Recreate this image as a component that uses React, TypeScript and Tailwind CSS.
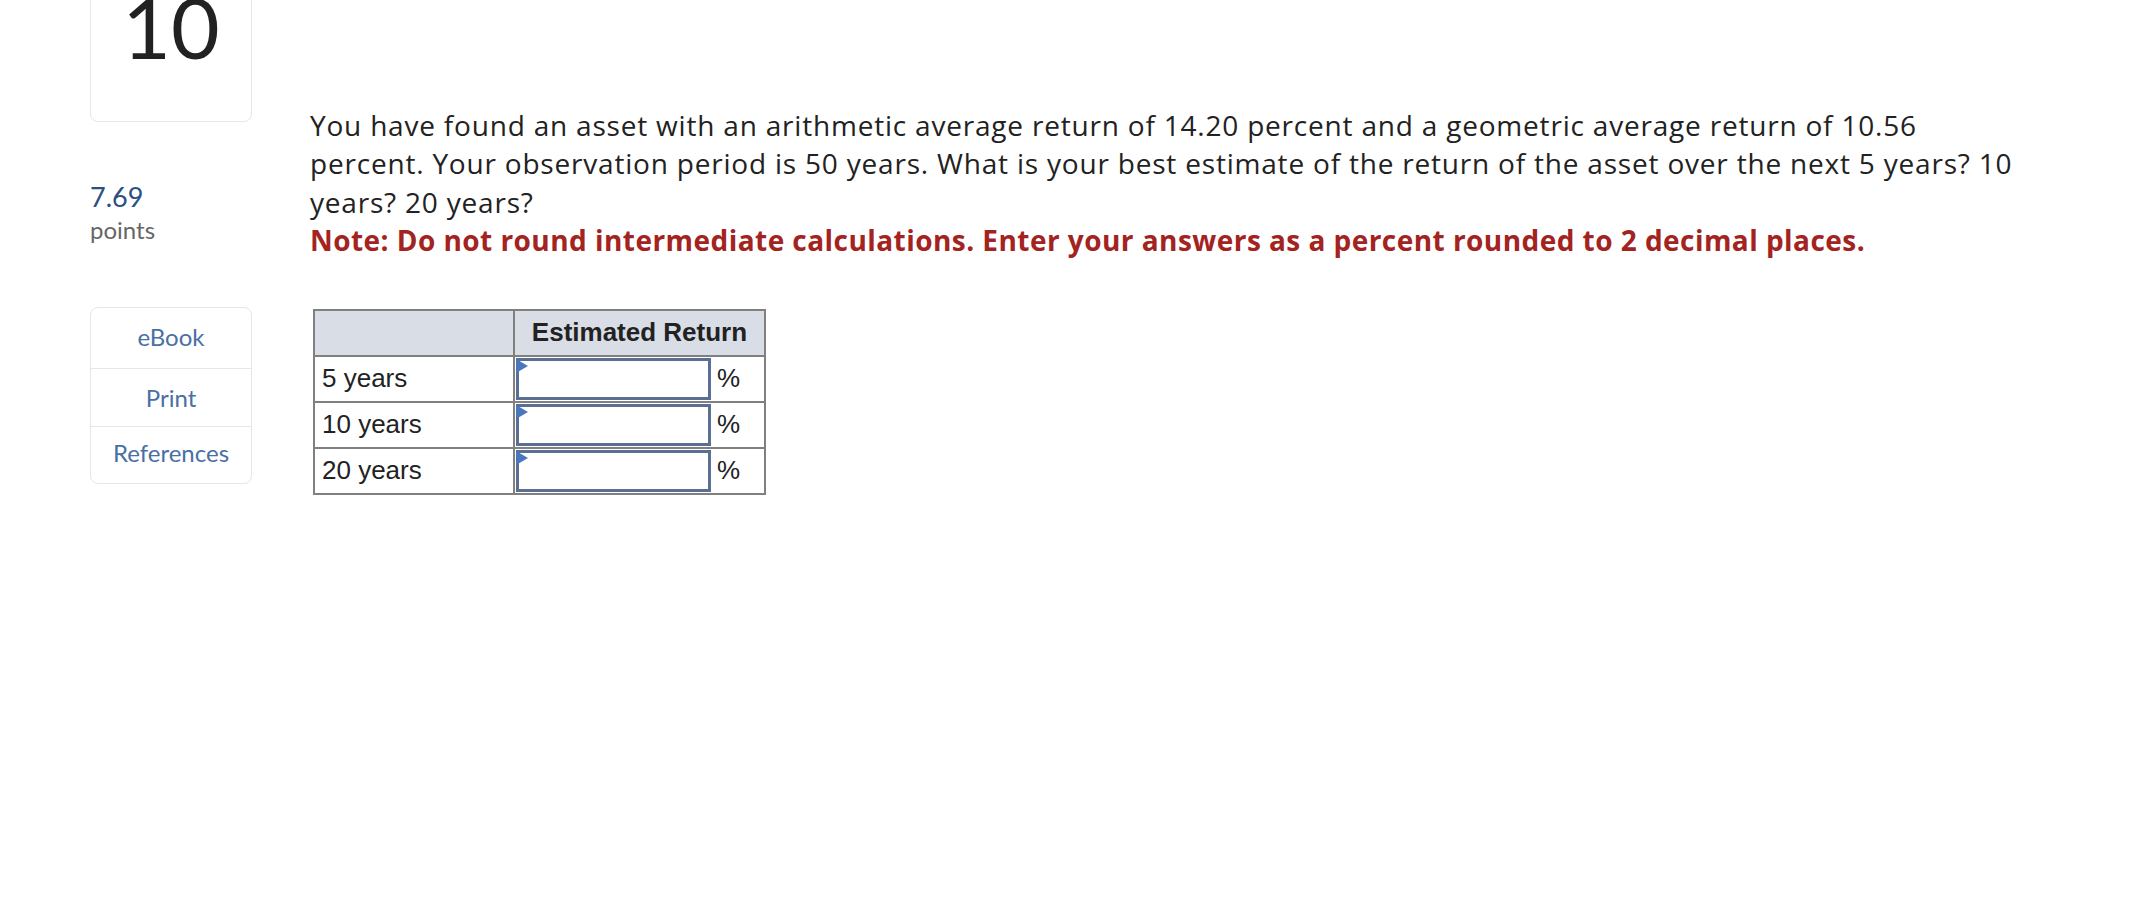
import React from 'react';

const rows = ['5 years', '10 years', '20 years'];

const AnswerInput: React.FC<{ label: string }> = ({ label }) => (
  <div className="relative h-[42px] border-[3px] border-[#5b6e94] bg-white">
    {/* little blue marker in the corner */}
    <span className="absolute -left-[3px] -top-[2px] h-0 w-0 border-y-[7px] border-l-[12px] border-y-transparent border-l-[#4a76bd]" />
    <input aria-label={label} className="h-full w-full bg-transparent px-2 outline-none" />
  </div>
);

const App: React.FC = () => {
  return (
    <div className="min-h-[903px] w-full overflow-hidden bg-white font-['Lato',sans-serif] text-[#222]">
      <div className="flex">
        {/* Left rail */}
        <aside className="ml-[90px] w-[162px] shrink-0">
          <div className="-mt-[20px] flex h-[142px] items-start justify-center rounded-lg border border-[#e6e6e6] pt-[4px]">
            <span className="text-[84px] leading-none text-[#222]">10</span>
          </div>
          <div className="mt-[57px] text-[27px] leading-[36px] text-[#2b4f80]">7.69</div>
          <div className="text-[24px] leading-[30px] text-[#666]">points</div>
          <nav className="mt-[62px] flex flex-col rounded-lg border border-[#e6e6e6] text-center text-[24px] text-[#4a6fa5]">
            <a className="h-[61px] leading-[58px] border-b border-[#e6e6e6]">eBook</a>
            <a className="h-[58px] leading-[58px] border-b border-[#e6e6e6]">Print</a>
            <a className="h-[56px] leading-[52px]">References</a>
          </nav>
        </aside>

        {/* Question */}
        <main className="ml-[58px] pt-[106px]">
          <div className="w-[1722px] font-['Open_Sans',sans-serif] text-[28px] leading-[38.4px]">
            <p className="tracking-[0.8px]">
              You have found an asset with an arithmetic average return of 14.20 percent and a geometric
              average return of 10.56 percent. Your observation period is 50 years. What is your best
              estimate of the return of the asset over the next 5 years? 10 years? 20 years?
            </p>
            <p className="font-bold tracking-[0.45px] text-[#a3231f]">
              Note: Do not round intermediate calculations. Enter your answers as a percent rounded to 2
              decimal places.
            </p>
          </div>

          <table className="mt-[49px] ml-[3px] border-collapse border-2 border-[#808080] font-['Liberation_Sans',Arial,sans-serif] text-[26px] text-[#222]">
            <thead>
              <tr className="h-[46px] bg-[#d9dde6]">
                <th className="w-[200px] border-2 border-[#808080]" />
                <th colSpan={2} className="border-2 border-[#808080] font-bold">
                  Estimated Return
                </th>
              </tr>
            </thead>
            <tbody>
              {rows.map((r) => (
                <tr key={r} className="h-[46px]">
                  <td className="border-2 border-[#808080] px-[7px]">{r}</td>
                  <td className="w-[198px] border-2 border-r-0 border-[#808080] p-[1px]">
                    <AnswerInput label={r} />
                  </td>
                  <td className="w-[53px] border-2 border-l-0 border-[#808080] px-[5px]">%</td>
                </tr>
              ))}
            </tbody>
          </table>
        </main>
      </div>
    </div>
  );
};

export default App;
